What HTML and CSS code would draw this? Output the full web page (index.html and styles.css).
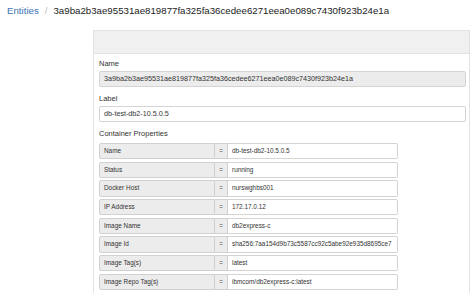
FILE: index.html
```html
<!DOCTYPE html>
<html>
<head>
<meta charset="utf-8">
<link rel="stylesheet" href="styles.css">
</head>
<body>
<div class="crumbs"><a class="crumb-link">Entities</a><span class="sep">/</span><span class="crumb-cur">3a9ba2b3ae95531ae819877fa325fa36cedee6271eea0e089c7430f923b24e1a</span></div>
<div class="panel">
  <div class="panel-head"></div>
  <div class="panel-body">
    <div class="lbl">Name</div>
    <div class="field ro">3a9ba2b3ae95531ae819877fa325fa36cedee6271eea0e089c7430f923b24e1a</div>
    <div class="lbl">Label</div>
    <div class="field">db-test-db2-10.5.0.5</div>
    <div class="lbl">Container Properties</div>
    <div class="props">
      <div class="row"><div class="key">Name</div><div class="eq">=</div><div class="val">db-test-db2-10.5.0.5</div></div>
      <div class="row"><div class="key">Status</div><div class="eq">=</div><div class="val">running</div></div>
      <div class="row"><div class="key">Docker Host</div><div class="eq">=</div><div class="val">nurswghbs001</div></div>
      <div class="row"><div class="key">IP Address</div><div class="eq">=</div><div class="val">172.17.0.12</div></div>
      <div class="row"><div class="key">Image Name</div><div class="eq">=</div><div class="val">db2express-c</div></div>
      <div class="row"><div class="key">Image Id</div><div class="eq">=</div><div class="val">sha256:7aa154d9b73c5587cc92c5abe92e935d8695ce7</div></div>
      <div class="row"><div class="key">Image Tag(s)</div><div class="eq">=</div><div class="val">latest</div></div>
      <div class="row"><div class="key">Image Repo Tag(s)</div><div class="eq">=</div><div class="val">ibmcom/db2express-c:latest</div></div>
    </div>
  </div>
</div>
</body>
</html>
```
FILE: styles.css
```css
html, body {
  margin: 0;
  padding: 0;
  background: #fff;
  font-family: "Liberation Sans", Arial, sans-serif;
  color: #333;
  overflow: hidden;
}
.crumbs {
  height: 22px;
  line-height: 22px;
  padding-left: 7px;
  font-size: 9.7px;
  white-space: nowrap;
}
.crumb-link { color: #3b74b6; }
.sep { color: #bbb; margin: 0 6px 0 6px; }
.crumb-cur { color: #222; }
.panel {
  margin: 8px 4px 0 93px;
  border: 1px solid #e2e2e2;
  border-bottom: none;
  height: 262px;
  overflow: hidden;
}
.panel-head {
  height: 22px;
  background: #f0f0f0;
  border-bottom: 1px solid #e2e2e2;
}
.panel-body {
  padding: 5px 3px 0 5px;
}
.lbl {
  font-size: 7.5px;
  line-height: 10px;
  margin-bottom: 2px;
}
.field {
  height: 16px;
  box-sizing: border-box;
  border: 1px solid #d4d4d4;
  border-radius: 2px;
  font-size: 7.2px;
  line-height: 14px;
  padding-left: 4px;
  margin-bottom: 7px;
  white-space: nowrap;
  overflow: hidden;
}
.field.ro { background: #ececec; }
.props { margin-top: 4px; }
.row {
  display: flex;
  height: 16.2px;
  margin-bottom: 2.5px;
  font-size: 6.4px;
  line-height: 14.2px;
}
.key {
  width: 116px;
  box-sizing: border-box;
  background: #ececec;
  border: 1px solid #d0d0d0;
  border-radius: 2px 0 0 2px;
  padding-left: 4px;
}
.eq {
  width: 13px;
  box-sizing: border-box;
  background: #ececec;
  border: 1px solid #d0d0d0;
  border-left: none;
  text-align: center;
  color: #555;
}
.val {
  width: 170px;
  box-sizing: border-box;
  background: #fff;
  border: 1px solid #d4d4d4;
  border-left: none;
  border-radius: 0 2px 2px 0;
  padding-left: 4px;
  white-space: nowrap;
  overflow: hidden;
}
```
